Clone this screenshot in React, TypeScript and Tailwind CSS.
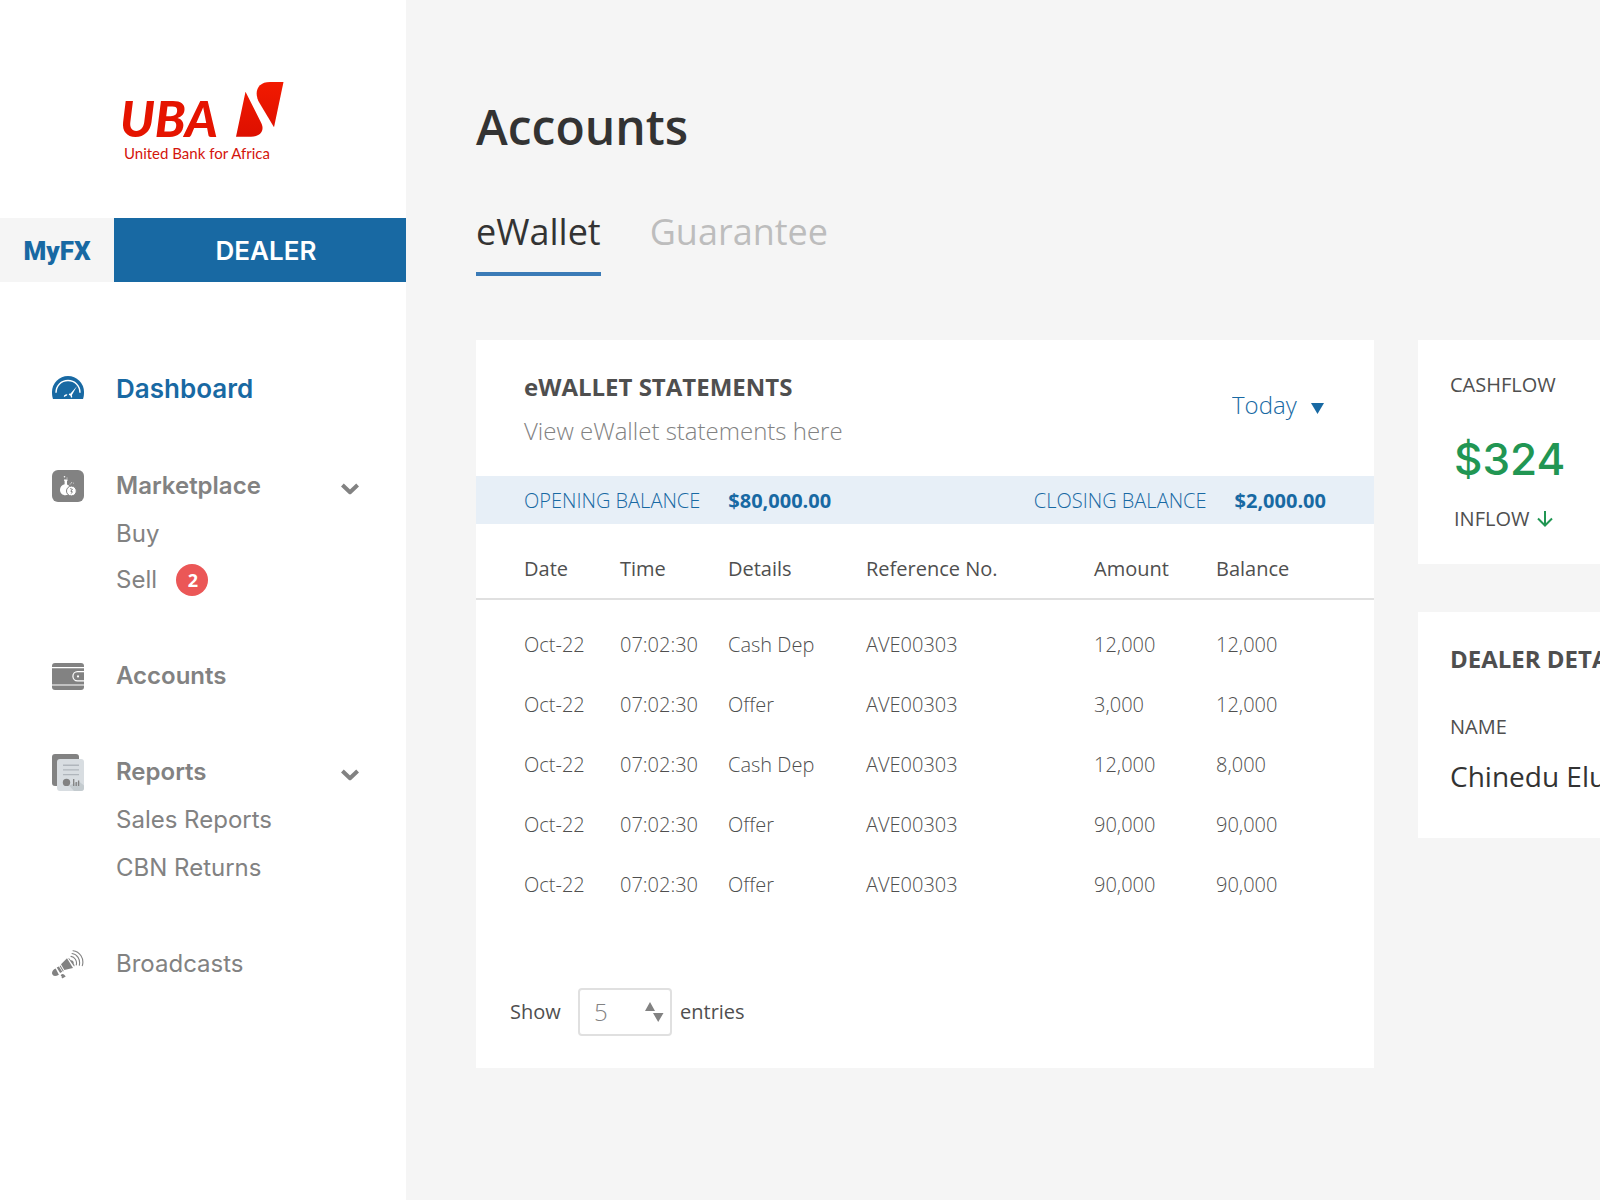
import React from "react";

function LogoMark() {
  return (
    <svg width="48" height="55" viewBox="0 0 48 55" className="ml-auto" aria-hidden="true">
      <defs>
        <linearGradient id="mark" x1="0" y1="0" x2="0" y2="55" gradientUnits="userSpaceOnUse">
          <stop offset="0" stopColor="#f21a00" />
          <stop offset="1" stopColor="#dd0f00" />
        </linearGradient>
      </defs>
      <path fill="url(#mark)" d="M9.5 9.7 0 54.7h15c8.5 0 12.600-5 11.300-10.700-.5-2-1.200-3.500-2.300-5.500z" />
      <path fill="url(#mark)" d="M47.500 0 38 45.300 23.500 21c-6-10.500-2.500-21 10.500-21z" />
    </svg>
  );
}

function GaugeIcon() {
  return (
    <svg width="32" height="23" viewBox="0 0 32 23" className="mb-1" aria-hidden="true">
      <path fill="#1869a3" d="M0 16a16 16 0 0 1 32 0c0 3-.3 5-1 7H1c-.7-2-1-4-1-7z" />
      <path fill="none" stroke="#fff" strokeWidth="1.400" d="M4 16.800C4 9.500 9.300 4.500 16 4.500s12 5 12 12.300" />
      <path fill="#fff" d="m24.900 10.200-5.400 9.600-1.900-1.300z" />
      <path fill="none" stroke="#fff" strokeWidth="1.400" d="M12.500 20.700c0-1.300 1.400-2 2.600-1.500M17 18.200c1.600.3 2.900 1.200 2.400 3.300" />
    </svg>
  );
}

function MarketIcon() {
  return (
    <svg width="32" height="32" viewBox="0 0 32 32" aria-hidden="true">
      <rect width="32" height="32" rx="6" fill="#828282" />
      <path fill="#fff" d="M12 9.500h3.600v1.200h-.6v3.700c2.200.8 3.700 2.700 3.700 5.200 0 3.200-2 5.700-5.200 5.700S8 23.200 8 19.800c0-2.600 1.700-4.700 4.600-5.500v-3.600H12z" />
      <circle cx="12.500" cy="6.700" r=".8" fill="#fff" />
      <circle cx="15" cy="8" r=".5" fill="#fff" />
      <circle cx="19.400" cy="21" r="4.900" fill="#fff" stroke="#828282" />
      <path fill="none" stroke="#828282" strokeWidth="1" d="m18.200 18.600 2.300.8-1.800 1.700 1.800.9-1.700 1.600" />
      <path fill="none" stroke="#fff" strokeWidth=".8" strokeDasharray="1 1" d="M18 14.500c0-2 4-3 4 0" />
    </svg>
  );
}

function WalletIcon() {
  return (
    <svg width="32" height="27" viewBox="0 0 32 27" aria-hidden="true">
      <rect width="32" height="27" rx="3" fill="#828282" />
      <path fill="none" stroke="#fff" strokeWidth="1.200" d="M0 4.600h32M0 22h32" />
      <path fill="none" stroke="#fff" strokeWidth="1.200" d="M32 8.700h-6.500a4.600 4.600 0 0 0 0 9.200H32" />
      <circle cx="26" cy="13.400" r="1.100" fill="#fff" />
    </svg>
  );
}

function ReportIcon() {
  return (
    <svg width="32" height="37" viewBox="0 0 32 37" aria-hidden="true">
      <rect width="27" height="32" rx="3" fill="#828282" />
      <rect x="5" y="5" width="27" height="32" rx="3" fill="#d8dde1" />
      <path fill="#c4cbcf" d="m17 31.500 10-4 5 4V34a3 3 0 0 1-3 3h-7z" />
      <path fill="none" stroke="#b0b6bc" strokeWidth="1.400" d="M11 11.200h16M11 15.900h16M11 20.600h16" />
      <circle cx="14.500" cy="28.400" r="3.700" fill="#828282" />
      <path fill="none" stroke="#828282" strokeWidth="1.300" d="M21.700 25v7M24.200 28v4M26.600 26.500V32" />
    </svg>
  );
}

function MegaphoneIcon() {
  return (
    <svg width="32" height="29" viewBox="0 0 32 29" aria-hidden="true">
      <path fill="#828282" d="m15 8.200 6 9.800-8.700 1.900-3.300-5.600z" />
      <path fill="#828282" d="M16.200 8.300c1.200-.6 1.800 1 2.500 1.900 1.700-.3 3.600 1.500 3 3.500.8 1.100 1.200 2.200.4 2.900z" />
      <path fill="#828282" d="m4.700 17.600 2.200-1.200 3.400 5.400-2.200 1.200zM7.600 16l.9-.5 3.300 5.400-.9.500zM3.700 18.400c-3 1.200-4.200 3.500-3.500 5.700.9 2.300 3.400 2.500 6.700.6z" />
      <path fill="none" stroke="#828282" strokeWidth="2" strokeLinecap="round" d="M9.800 25.300c.8-.4 1.500-.6 2.500.9l-1.700 1" />
      <path fill="none" stroke="#828282" strokeWidth="1.100" strokeLinecap="round" d="M19 6.400c3.600.3 6.300 4.300 5.300 8.500M20 3.500c5 .5 8.700 6 7.300 11.800M21 .7c6.800.6 11.500 8 9.300 15" />
    </svg>
  );
}

function Chevron() {
  return (
    <svg width="18" height="12" viewBox="0 0 18 12" className="mt-1.5" aria-hidden="true">
      <path fill="none" stroke="#828282" strokeWidth="4" strokeLinejoin="round" d="m1.400 2 7.600 7.200L16.600 2" />
    </svg>
  );
}

type Item = { label: string; row: string; badge?: string };
type Group = { label: string; icon: React.ReactNode; tone: string; items?: Item[] };

const groups: Group[] = [
  { label: "Dashboard", icon: <GaugeIcon />, tone: "text-[26px] leading-[50px] font-semibold text-[#1869a3]" },
  {
    label: "Marketplace",
    icon: <MarketIcon />,
    tone: "text-2xl leading-12 font-semibold",
    items: [
      { label: "Buy", row: "h-12" },
      { label: "Sell", row: "h-11 mb-0.5", badge: "2" },
    ],
  },
  { label: "Accounts", icon: <WalletIcon />, tone: "text-2xl leading-12 font-semibold" },
  {
    label: "Reports",
    icon: <ReportIcon />,
    tone: "text-2xl leading-12 font-semibold",
    items: [
      { label: "Sales Reports", row: "h-12" },
      { label: "CBN Returns", row: "h-12" },
    ],
  },
  { label: "Broadcasts", icon: <MegaphoneIcon />, tone: "text-2xl leading-12" },
];

function Sidebar() {
  return (
    <aside className="w-[406px] shrink-0 bg-white font-['Inter',sans-serif] text-[#828282]">
      <div className="flex flex-col pt-[81px] pl-[120px]">
        <div className="flex h-14 w-[164px] items-end text-[#e51400]">
          <span className="font-['Lato',sans-serif] text-[50px] leading-[38px] font-black italic">UBA</span>
          <LogoMark />
        </div>
        <span className="mt-1 pl-1 font-['Lato',sans-serif] text-[15px] leading-6 text-[#d4150c]">United Bank for Africa</span>
      </div>
      <div className="mt-[53px] flex h-16">
        <div className="flex w-[114px] items-center justify-center bg-[#f5f5f5] pt-0.5 font-['Roboto',sans-serif] text-[26px] font-black text-[#1869a3]">MyFX</div>
        <div className="flex flex-1 items-center justify-center bg-[#1869a3] pl-3 text-[26px] font-semibold text-white">DEALER</div>
      </div>
      <nav className="mt-[82px] flex flex-col gap-12 pr-[47px] pl-[52px]">
        {groups.map((g) => (
          <div key={g.label}>
            {g.items ? (
              <button type="button" className="flex w-full items-center text-left">
                <span className="w-16">{g.icon}</span>
                <span className={g.tone}>{g.label}</span>
                <span className="ml-auto"><Chevron /></span>
              </button>
            ) : (
              <a href="#" className="flex items-center">
                <span className="w-16">{g.icon}</span>
                <span className={g.tone}>{g.label}</span>
              </a>
            )}
            {g.items?.map((it) => (
              <a key={it.label} href="#" className={`flex items-center gap-[19px] pl-16 text-2xl ${it.row}`}>
                {it.label}
                {it.badge && (
                  <span className="flex size-8 items-center justify-center rounded-full bg-[#eb5757] pl-0.5 font-['Open_Sans',sans-serif] text-lg font-bold text-white">{it.badge}</span>
                )}
              </a>
            ))}
          </div>
        ))}
      </nav>
    </aside>
  );
}

const rows = [
  ["Oct-22", "07:02:30", "Cash Dep", "AVE00303", "12,000", "12,000"],
  ["Oct-22", "07:02:30", "Offer", "AVE00303", "3,000", "12,000"],
  ["Oct-22", "07:02:30", "Cash Dep", "AVE00303", "12,000", "8,000"],
  ["Oct-22", "07:02:30", "Offer", "AVE00303", "90,000", "90,000"],
  ["Oct-22", "07:02:30", "Offer", "AVE00303", "90,000", "90,000"],
];

const columns = [
  { label: "Date", width: "w-[144px]" },
  { label: "Time", width: "w-[108px]" },
  { label: "Details", width: "w-[138px]" },
  { label: "Reference No.", width: "w-[228px]" },
  { label: "Amount", width: "w-[122px]" },
  { label: "Balance", width: "w-[158px]" },
];

function Statements() {
  return (
    <section className="bg-white text-xl text-[#4f4f4f]">
      <header className="flex items-center justify-between px-12 pt-[25px] pb-[23px] text-2xl">
        <div>
          <h2 className="leading-[44px] font-bold">eWALLET STATEMENTS</h2>
          <p className="leading-[44px] font-light text-[#828282]">View eWallet statements here</p>
        </div>
        <div className="relative pb-2 font-light text-[#1869a3]">
          <select aria-label="Period" className="w-[94px] appearance-none bg-transparent leading-8">
            <option>Today</option>
          </select>
          <svg width="13" height="11" viewBox="0 0 13 11" className="pointer-events-none absolute top-3.5 right-0.5" aria-hidden="true">
            <path fill="#1869a3" d="M0 0h13L6.500 11z" />
          </svg>
        </div>
      </header>
      <div className="flex h-12 items-center justify-between bg-[#e7eff7] px-12 pt-0.5 text-[#1869a3]">
        <p className="flex gap-7"><span className="font-light">OPENING BALANCE</span><b>$80,000.00</b></p>
        <p className="flex gap-7"><span className="font-light">CLOSING BALANCE</span><b>$2,000.00</b></p>
      </div>
      <table className="w-full table-fixed border-collapse text-left">
        <thead>
          <tr className="border-b-2 border-[#e0e0e0]">
            {columns.map((c) => (
              <th key={c.label} className={`h-[75px] pt-4 font-medium first:pl-12 ${c.width}`}>{c.label}</th>
            ))}
          </tr>
        </thead>
        <tbody className="font-light before:block before:h-[15px] before:content-['']">
          {rows.map((r, i) => (
            <tr key={i}>
              {r.map((v, j) => (
                <td key={j} className="h-[60px] first:pl-12">{v}</td>
              ))}
            </tr>
          ))}
        </tbody>
      </table>
      <div className="flex items-center pt-[73px] pb-8 pl-[34px] font-medium">
        <label htmlFor="entries" className="w-[68px]">Show</label>
        <div className="relative">
          <select id="entries" className="h-12 w-[94px] appearance-none rounded border-2 border-[#e0e0e0] bg-white pl-3.5 text-2xl font-light text-[#828282]">
            <option>5</option>
          </select>
          <svg width="19" height="20" viewBox="0 0 19 20" className="pointer-events-none absolute top-3.5 right-2" aria-hidden="true">
            <path fill="#828282" d="M0 9h10L5 0zM8 11h10.500L13.200 20z" />
          </svg>
        </div>
        <span className="pl-2">entries</span>
      </div>
    </section>
  );
}

function SidePanels() {
  return (
    <div className="flex min-w-0 flex-col gap-12 whitespace-nowrap text-xl text-[#4f4f4f]">
      <section className="overflow-hidden bg-white pt-[29px] pb-[29px] pl-8">
        <h2 className="leading-8 font-medium">CASHFLOW</h2>
        <p className="mt-[34px] pl-1 font-['Inter',sans-serif] text-[44px] leading-12 font-medium text-[#219653]">$324</p>
        <p className="mt-5 flex items-center gap-2 pl-1 leading-8 font-medium">
          INFLOW
          <svg width="16" height="16" viewBox="0 0 16 16" aria-hidden="true">
            <path fill="none" stroke="#219653" strokeWidth="2" d="M8 0v14.500M1 7.500l7 7 7-7" />
          </svg>
        </p>
      </section>
      <section className="overflow-hidden bg-white pt-[31px] pb-11 pl-8">
        <h2 className="text-2xl leading-8 font-bold">DEALER DETAILS</h2>
        <p className="mt-9 leading-8 font-medium">NAME</p>
        <p className="mt-[15px] text-[28px] leading-9 font-medium text-[#333333]">Chinedu Elu</p>
      </section>
    </div>
  );
}

export default function App() {
  return (
    <div className="flex min-h-screen overflow-hidden bg-[#f5f5f5] font-['Open_Sans',sans-serif]">
      <Sidebar />
      <main className="min-w-0 flex-1 pt-[103px] pb-16 pl-[70px]">
        <h1 className="text-5xl leading-12 font-semibold text-[#333333]">Accounts</h1>
        <div role="tablist" className="mt-[63px] flex gap-[49px] text-4xl leading-9 font-medium">
          <button type="button" role="tab" aria-selected="true" className="border-b-4 border-[#3b7bb7] pb-[22px] text-[#333333]">eWallet</button>
          <button type="button" role="tab" aria-selected="false" className="border-b-4 border-transparent pb-[22px] text-[#bdbdbd]">Guarantee</button>
        </div>
        <div className="mt-16 grid grid-cols-[minmax(898px,1fr)_182px] items-start gap-11">
          <Statements />
          <SidePanels />
        </div>
      </main>
    </div>
  );
}
